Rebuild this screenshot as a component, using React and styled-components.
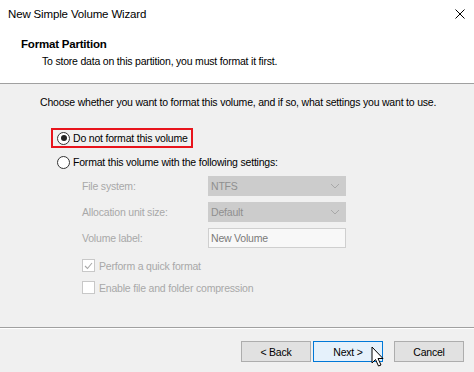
import React from 'react';
import styled, { createGlobalStyle } from 'styled-components';

const Global = createGlobalStyle`
  html, body { margin: 0; padding: 0; }
  body {
    width: 474px;
    height: 372px;
    overflow: hidden;
    font-family: "Liberation Sans", Arial, sans-serif;
    font-size: 10.5px;
    letter-spacing: -0.2px;
    color: #000;
  }
`;

const Window = styled.div`
  width: 474px;
  height: 372px;
  display: flex;
  flex-direction: column;
  background: #f0f0f0;
  position: relative;
`;

const Header = styled.div`
  height: 83px;
  background: #fff;
  border-bottom: 1px solid #a0a0a0;
  position: relative;
`;

const TitleBar = styled.div`
  height: 28px;
  display: flex;
  align-items: center;
  justify-content: space-between;
  padding: 0 3px 0 8px;
  font-size: 11.5px;
  letter-spacing: -0.15px;
`;

const CloseBtn = styled.div`
  width: 22px;
  height: 28px;
  display: flex;
  align-items: center;
  justify-content: center;
`;

const HeaderText = styled.div`
  padding: 9px 0 0 21px;
`;

const PageTitle = styled.div`
  font-weight: bold;
  font-size: 11.5px;
  letter-spacing: -0.2px;
  line-height: 15px;
`;

const PageSub = styled.div`
  padding-left: 21px;
  line-height: 16px;
  margin-top: 1px;
`;

const Body = styled.div`
  flex: 1;
  padding: 11px 0 0 40px;
  border-bottom: 1px solid #a0a0a0;
`;

const Intro = styled.div`
  line-height: 15px;
  margin-bottom: 18px;
`;

const Options = styled.div`
  display: flex;
  flex-direction: column;
  gap: 4px;
  margin-left: 11px;
`;

const Choice = styled.label`
  display: inline-flex;
  align-items: center;
  gap: 3px;
  height: 20px;
  box-sizing: border-box;
  padding: 0 3px 0 4px;
  border: 2px solid ${p => (p.$highlight ? '#e8141c' : 'transparent')};
  align-self: flex-start;
`;

const Radio = styled.span`
  width: 11px;
  height: 11px;
  border-radius: 50%;
  border: 1px solid #333;
  background: #fff;
  display: flex;
  align-items: center;
  justify-content: center;
  &::after {
    content: '';
    width: 6px;
    height: 6px;
    border-radius: 50%;
    background: ${p => (p.$checked ? '#222' : 'transparent')};
  }
`;

const Settings = styled.div`
  margin: 4px 0 0 42px;
  display: grid;
  grid-template-columns: 126px 138px;
  row-gap: 6px;
  align-items: center;
`;

const Label = styled.span`
  color: #a8a8a8;
`;

const Select = styled.div`
  height: 20px;
  background: #cccccc;
  color: #8f8f8f;
  display: flex;
  align-items: center;
  justify-content: space-between;
  padding: 0 6px 0 3px;
`;

const TextBox = styled.div`
  height: 18px;
  background: #f8f8f8;
  border: 1px solid #cfcfcf;
  color: #7a7a7a;
  display: flex;
  align-items: center;
  padding-left: 2px;
`;

const Checks = styled.div`
  margin: 11px 0 0 42px;
  display: flex;
  flex-direction: column;
  gap: 9px;
`;

const CheckRow = styled.div`
  display: flex;
  align-items: center;
  gap: 4px;
  color: #a8a8a8;
`;

const Box = styled.span`
  width: 11px;
  height: 11px;
  border: 1px solid #c8c8c8;
  background: #fff;
  display: flex;
  align-items: center;
  justify-content: center;
`;

const Footer = styled.div`
  height: 44px;
  border-top: 1px solid #fff;
  display: flex;
  justify-content: flex-end;
  align-items: flex-start;
  padding: 12px 10px 0 0;
  box-sizing: border-box;
`;

const Button = styled.div`
  width: 68px;
  height: 19px;
  background: ${p => (p.$primary ? '#e5f1fb' : '#e1e1e1')};
  border: 1px solid ${p => (p.$primary ? '#0078d7' : '#adadad')};
  display: flex;
  align-items: center;
  justify-content: center;
  margin-left: ${p => p.$gap || 0}px;
`;

const Cursor = styled.svg`
  position: absolute;
  left: 371px;
  top: 346px;
`;

const Chevron = () => (
  <svg width="10" height="6" viewBox="0 0 10 6">
    <path d="M1 1 L5 5 L9 1" fill="none" stroke="#a8a8a8" strokeWidth="1" />
  </svg>
);

export default function App() {
  return (
    <>
      <Global />
      <Window>
        <Header>
          <TitleBar>
            <span>New Simple Volume Wizard</span>
            <CloseBtn>
              <svg width="10" height="10" viewBox="0 0 10 10">
                <path d="M0.5 0.5 L9.5 9.5 M9.5 0.5 L0.5 9.5" stroke="#000" strokeWidth="1" />
              </svg>
            </CloseBtn>
          </TitleBar>
          <HeaderText>
            <PageTitle>Format Partition</PageTitle>
            <PageSub>To store data on this partition, you must format it first.</PageSub>
          </HeaderText>
        </Header>
        <Body>
          <Intro>Choose whether you want to format this volume, and if so, what settings you want to use.</Intro>
          <Options>
            <Choice $highlight>
              <Radio $checked />
              <span>Do not format this volume</span>
            </Choice>
            <Choice>
              <Radio />
              <span>Format this volume with the following settings:</span>
            </Choice>
          </Options>
          <Settings>
            <Label>File system:</Label>
            <Select><span>NTFS</span><Chevron /></Select>
            <Label>Allocation unit size:</Label>
            <Select><span>Default</span><Chevron /></Select>
            <Label>Volume label:</Label>
            <TextBox>New Volume</TextBox>
          </Settings>
          <Checks>
            <CheckRow>
              <Box>
                <svg width="9" height="8" viewBox="0 0 9 8">
                  <path d="M1 4 L3.5 6.5 L8 1" fill="none" stroke="#a8a8a8" strokeWidth="1.1" />
                </svg>
              </Box>
              <span>Perform a quick format</span>
            </CheckRow>
            <CheckRow>
              <Box />
              <span>Enable file and folder compression</span>
            </CheckRow>
          </Checks>
        </Body>
        <Footer>
          <Button>&lt; Back</Button>
          <Button $primary $gap={2}>Next &gt;</Button>
          <Button $gap={11}>Cancel</Button>
        </Footer>
        <Cursor width="14" height="22" viewBox="0 0 14 22">
          <path d="M1 1 L1 17 L4.5 13.5 L7.5 20 L10 19 L7 12.5 L12 12.5 Z" fill="#fff" stroke="#000" strokeWidth="1" strokeLinejoin="round" />
        </Cursor>
      </Window>
    </>
  );
}
